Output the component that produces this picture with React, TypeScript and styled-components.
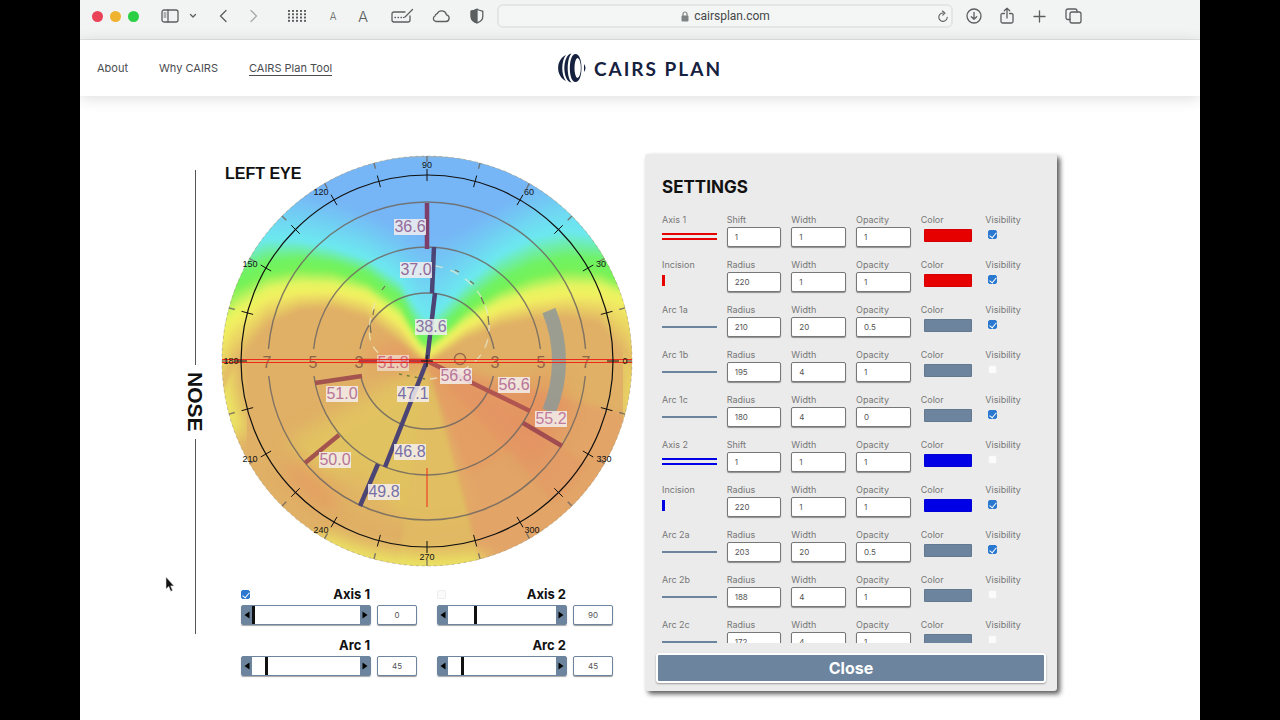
import React from 'react';
import styled, { createGlobalStyle } from 'styled-components';

const SLATE = '#6c849d';

const GlobalStyle = createGlobalStyle`
  * { box-sizing: border-box; }
  body { margin: 0; background: #000; font-family: Inter, "Liberation Sans", sans-serif; color: #111; }
  button { border: 0; padding: 0; background: none; font: inherit; color: inherit; cursor: pointer; }
`;

/* ---------- window and browser chrome ---------- */

const Window = styled.div`
  min-height: 100vh;
  margin: 0 80px;
  background: #fff;
`;

const BrowserBar = styled.div`
  display: flex;
  align-items: flex-start;
  height: 40px;
  padding: 4px 113px 0 12px;
  background: #f1f4f3;
  border-bottom: 1px solid #e2e4e4;
`;

const Lights = styled.div`
  display: flex;
  align-items: center;
  gap: 7px;
  height: 24px;
  margin-right: 19px;
`;

const Light = styled.button<{ $color: string }>`
  width: 11px;
  height: 11px;
  border-radius: 50%;
  background: ${(p) => p.$color};
`;

const ToolButton = styled.button<{ $width: number; $size?: number; $faint?: boolean }>`
  display: flex;
  flex: none;
  align-items: center;
  justify-content: center;
  width: ${(p) => p.$width}px;
  height: 24px;
  font-size: ${(p) => p.$size || 12}px;
  font-weight: 300;
  color: ${(p) => (p.$faint ? '#a8abab' : '#5c5f60')};
`;

const Address = styled.div`
  display: flex;
  flex: 1;
  align-items: center;
  justify-content: center;
  gap: 5px;
  height: 24px;
  margin-left: 9px;
  padding: 0 2px 0 20px;
  border: 2px solid #e3e6e5;
  border-radius: 6px;
  background: #f3f6f5;
  color: #6a6d6e;
`;

const AddressText = styled.div`
  display: flex;
  flex: 1;
  align-items: center;
  justify-content: center;
  gap: 5px;
  font: 12px/16px Roboto, sans-serif;
  color: #444748;
`;

/* ---------- site header ---------- */

const Header = styled.header`
  display: grid;
  grid-template-columns: 1fr auto 1fr;
  align-items: center;
  height: 56px;
  padding: 0 17px;
  background: #fff;
  box-shadow: 0 2px 14px rgba(0, 0, 0, 0.14);
`;

const Nav = styled.nav`
  display: flex;
  gap: 31px;
`;

const NavLink = styled.a<{ $current?: boolean }>`
  font-size: 11px;
  line-height: 14px;
  color: #4a4c50;
  text-decoration: none;
  border-bottom: 1px solid ${(p) => (p.$current ? '#4a4c50' : 'transparent')};
`;

const Brand = styled.a`
  display: flex;
  align-items: center;
  gap: 8px;
  color: #16213f;
  font-family: Lato, sans-serif;
  font-size: 19px;
  font-weight: 700;
  letter-spacing: 2px;
  text-decoration: none;
`;

/* ---------- page body ---------- */

const Main = styled.main`
  display: flex;
  align-items: flex-start;
  padding: 58px 24px 24px 104px;
`;

const NoseSide = styled.div`
  display: flex;
  flex-direction: column;
  align-items: center;
  gap: 7px;
  flex: none;
  width: 22px;
  height: 464px;
  margin: 16px 15px 0 0;
`;

const NoseLine = styled.div`
  flex: 1;
  width: 1px;
  background: #555;
`;

const NoseText = styled.span`
  writing-mode: vertical-rl;
  font: bold 21px/22px "Liberation Sans", Arial, sans-serif;
`;

const EyeColumn = styled.section`
  position: relative;
  flex: none;
  width: 412px;
  margin: 0 12px 0 0;
`;

const EyeTitle = styled.h2`
  position: absolute;
  top: 10px;
  left: 4px;
  margin: 0;
  font: bold 16px/20px "Liberation Sans", Arial, sans-serif;
`;

const MapSvg = styled.svg`
  display: block;
  width: 100%;
`;

const AxisControls = styled.div`
  display: grid;
  grid-template-columns: 1fr 1fr;
  gap: 12px 20px;
  padding: 19px 20px 0;
`;

const AxisHead = styled.div`
  display: flex;
  align-items: center;
  justify-content: space-between;
  width: 129px;
  height: 16px;
  margin-bottom: 3px;
`;

const AxisName = styled.label`
  margin-left: auto;
  font-size: 13px;
  line-height: 16px;
  font-weight: 700;
`;

const AxisRow = styled.div`
  display: flex;
  justify-content: space-between;
`;

const Slider = styled.div`
  display: flex;
  width: 130px;
  height: 20px;
  border: 1px solid ${SLATE};
  border-radius: 2px;
  box-shadow: 0 1px 1px rgba(0, 0, 0, 0.35);
`;

const StepButton = styled.button`
  display: flex;
  align-items: center;
  justify-content: center;
  width: 10px;
  background: ${SLATE};
`;

const Range = styled.input`
  appearance: none;
  flex: 1;
  min-width: 0;
  height: 18px;
  margin: 0;
  background: #fff;
  &::-webkit-slider-thumb {
    appearance: none;
    width: 3px;
    height: 18px;
    background: #111;
  }
`;

const TextField = styled.input<{ $center?: boolean }>`
  width: ${(p) => (p.$center ? '40px' : '100%')};
  height: 20px;
  padding: ${(p) => (p.$center ? '0' : '0 7px')};
  border: 1px solid ${(p) => (p.$center ? SLATE : '#777')};
  border-radius: 2px;
  background: #fff;
  box-shadow: 0 1px 1px rgba(0, 0, 0, 0.4);
  font-family: inherit;
  font-size: 8px;
  color: #555;
  text-align: ${(p) => (p.$center ? 'center' : 'left')};
`;

const Check = styled.input`
  appearance: none;
  display: flex;
  align-items: center;
  justify-content: center;
  flex: none;
  width: 9px;
  height: 9px;
  margin: 0;
  border: 1px solid #eee;
  border-radius: 2px;
  background: #fbfbfb;
  &:checked {
    border-color: #2a78cf;
    background: #2a78cf;
  }
  &:checked::after {
    content: "";
    width: 3px;
    height: 6px;
    border: solid #fff;
    border-width: 0 1px 1px 0;
    transform: rotate(40deg);
  }
`;

/* ---------- settings panel ---------- */

const Panel = styled.section`
  display: flex;
  flex-direction: column;
  flex: none;
  width: 412px;
  padding: 22px 11px 8px;
  border-radius: 3px;
  background: #ebebeb;
  box-shadow: 3px 3px 5px rgba(0, 0, 0, 0.65);
`;

const PanelTitle = styled.h2`
  margin: 0 6px 15px;
  font-size: 17px;
  line-height: 22px;
  font-weight: 700;
`;

const SettingsList = styled.div`
  height: 430px;
  padding: 0 6px;
  overflow-y: auto;
  scrollbar-width: none;
`;

const SettingsRow = styled.div`
  display: grid;
  grid-template-columns: repeat(6, minmax(0, 1fr));
  column-gap: 10px;
  height: 45px;
`;

const Cell = styled.label`
  display: flex;
  flex-direction: column;
  font-size: 9px;
  line-height: 14px;
  color: #777;
`;

const Sample = styled.span<{ $kind: Kind; $color: string }>`
  width: ${(p) => (p.$kind === 'mark' ? '3px' : '100%')};
  height: ${(p) => ({ axis: 7, mark: 11, arc: 2 })[p.$kind]}px;
  margin-top: ${(p) => ({ axis: 6, mark: 3, arc: 9 })[p.$kind]}px;
  border: solid ${(p) => p.$color};
  border-width: ${(p) => ({ axis: '2px 0', mark: '0 3px 0 0', arc: '2px 0 0' })[p.$kind]};
`;

const Swatch = styled.input`
  appearance: none;
  width: 48px;
  height: 13px;
  margin: 2px 0 0 3px;
  padding: 0;
  border: 0;
  background: none;
  &::-webkit-color-swatch-wrapper { padding: 0; }
  &::-webkit-color-swatch { border: 1px solid rgba(0, 0, 0, 0.08); border-radius: 1px; }
`;

const CheckSlot = styled.span`
  padding: 3px;
`;

const CloseButton = styled.button`
  height: 30px;
  margin-top: 10px;
  padding-bottom: 1px;
  border: 2px solid #fff;
  border-radius: 3px;
  background: ${SLATE};
  box-shadow: 0 1px 2px rgba(0, 0, 0, 0.35);
  color: #fff;
  font-size: 16px;
  line-height: 20px;
  font-weight: 700;
`;

const Pointer = styled.svg`
  position: absolute;
  top: 576px;
  left: 165px;
`;

/* ---------- data ---------- */

type Kind = 'axis' | 'mark' | 'arc';
type Row = [string, Kind, string, string, string, string, boolean];

const ROWS: Row[] = [
  ['Axis 1', 'axis', '1', '1', '1', '#e60000', true],
  ['Incision', 'mark', '220', '1', '1', '#e60000', true],
  ['Arc 1a', 'arc', '210', '20', '0.5', SLATE, true],
  ['Arc 1b', 'arc', '195', '4', '1', SLATE, false],
  ['Arc 1c', 'arc', '180', '4', '0', SLATE, true],
  ['Axis 2', 'axis', '1', '1', '1', '#0000e6', false],
  ['Incision', 'mark', '220', '1', '1', '#0000e6', true],
  ['Arc 2a', 'arc', '203', '20', '0.5', SLATE, true],
  ['Arc 2b', 'arc', '188', '4', '1', SLATE, false],
  ['Arc 2c', 'arc', '172', '4', '1', SLATE, false],
];

const CONTROLS = [
  { name: 'Axis 1', value: 0, checked: true },
  { name: 'Axis 2', value: 90, checked: false },
  { name: 'Arc 1', value: 45 },
  { name: 'Arc 2', value: 45 },
];

/* Height of each colour contour above the map centre, sampled along x. */
const XS = [-206, -194, -160, -127, -94, -60, -27, -8, 0, 12, 39, 73, 106, 139, 173, 199, 206];
const CONTOURS: { color: number[]; y: number[] }[] = [
  { color: [224, 176, 102], y: [40, 10, -34, -50, -52, -42, -18, -2, 3, -4, -21, -34, -40, -43, -36, 0, 20] },
  { color: [242, 240, 98], y: [-22, -38, -62, -68, -69, -61, -37, -12, -5, -13, -34, -51, -60, -65, -64, -56, -48] },
  { color: [230, 244, 96], y: [-34, -48, -71, -77, -76, -68, -44, -15, -8, -17, -39, -58, -69, -75, -74, -64, -56] },
  { color: [118, 242, 88], y: [-58, -71, -87, -92, -90, -79, -56, -22, -16, -24, -50, -71, -84, -91, -89, -76, -72] },
  { color: [112, 242, 100], y: [-74, -83, -99, -102, -98, -88, -65, -29, -23, -30, -57, -81, -96, -103, -101, -91, -86] },
  { color: [108, 232, 240], y: [-106, -110, -121, -120, -113, -102, -80, -50, -42, -50, -77, -105, -122, -129, -124, -112, -108] },
  { color: [118, 182, 246], y: [-168, -172, -172, -166, -158, -146, -130, -120, -118, -120, -132, -152, -172, -188, -186, -180, -176] },
];

const STEPS = 14;
const BANDS = CONTOURS.slice(1).flatMap((to, i) => {
  const from = CONTOURS[i];
  return Array.from({ length: STEPS }, (_, s) => {
    const t = (s + 1) / STEPS;
    const mix = (a: number, b: number) => a + (b - a) * t;
    const points = XS.map((x, k) => `${x},${mix(from.y[k], to.y[k]).toFixed(1)}`).join(' ');
    const color = from.color.map((c, k) => Math.round(mix(c, to.color[k]))).join(',');
    return { points: `-206,-206 ${points} 206,-206`, color: `rgb(${color})` };
  });
});

const RED = '#a4544e';
const NAVY = '#4b4474';
const MERIDIANS: [number, number, number, number, string][] = [
  [0, -158, 0, -112, '#7d3f69'],
  [7, -114, 5, -68, NAVY],
  [8, -68, 0, 0, NAVY],
  [-68, 0, 0, 0, '#b93a3c'],
  [0, 0, -42, 106, NAVY],
  [-49, 103, -67, 145, NAVY],
  [-112, 22, -65, 15, RED],
  [-88, 74, -122, 102, RED],
  [0, 0, 103, 50, '#b05550'],
  [96, 62, 135, 85, '#a04c50'],
];

const READINGS: [string, number, number, string][] = [
  ['36.6', -17, -134, '#94699a'],
  ['37.0', -11, -91, '#94699a'],
  ['38.6', 4, -34, '#8b73a6'],
  ['51.8', -34, 2, '#cf6c80'],
  ['51.0', -85, 33, '#b87598'],
  ['50.0', -92, 99, '#b87598'],
  ['56.8', 29, 15, '#b87598'],
  ['56.6', 87, 24, '#b87598'],
  ['55.2', 124, 58, '#c07c9c'],
  ['47.1', -14, 33, '#7770a8'],
  ['46.8', -17, 91, '#7770a8'],
  ['49.8', -43, 131, '#7770a8'],
];

const DEGREES: [string, number, number][] = [
  ['0', 198, 0], ['30', 174, -97], ['60', 102, -169], ['90', 0, -196],
  ['120', -106, -169], ['150', -177, -97], ['180', -196, 0], ['210', -177, 98],
  ['240', -106, 169], ['270', 0, 196], ['300', 105, 169], ['330', 177, 98],
];

const polar = (r: number, deg: number): [number, number] => {
  const a = (deg * Math.PI) / 180;
  return [r * Math.cos(a), -r * Math.sin(a)];
};

const wedge = (r: number, from: number, to: number) =>
  `M0 0L${polar(r, to).join(' ')}A${r} ${r} 0 0 ${from > to ? 0 : 1} ${polar(r, from).join(' ')}Z`;

const halfRing = (r: number, up: boolean) => {
  const y = up ? -12 : 15;
  const x = Math.sqrt(r * r - y * y);
  return `M${-x} ${y}A${r} ${r} 0 0 ${up ? 1 : 0} ${x} ${y}`;
};

function CorneaMap() {
  const spokes = Array.from({ length: 24 }, (_, i) => i * 15);
  const [ax, ay] = polar(132, 22.5);
  return (
    <MapSvg viewBox="-206 -207 412 413" role="img" aria-label="Corneal curvature map of the left eye">
      <defs>
        <clipPath id="disc"><circle r="205" /></clipPath>
        <filter id="soft" x="-20%" y="-20%" width="140%" height="140%"><feGaussianBlur stdDeviation="2" /></filter>
        <filter id="haze" x="-50%" y="-50%" width="200%" height="200%"><feGaussianBlur stdDeviation="9" /></filter>
      </defs>
      <g clipPath="url(#disc)">
        <rect x="-206" y="-206" width="412" height="412" fill="#e0b066" />
        <path d={wedge(160, 290, 210)} fill="#e2c761" opacity="0.8" filter="url(#haze)" />
        <path d={wedge(215, 285, 262)} fill="#e1bd64" opacity="0.7" filter="url(#soft)" />
        <path d={wedge(215, 345, 285)} fill="#e3a167" opacity="0.75" filter="url(#soft)" />
        <path d={wedge(150, 342, 315)} fill="#e59062" opacity="0.6" filter="url(#haze)" />
        <path d={wedge(120, 315, 290)} fill="#e69a62" opacity="0.5" filter="url(#soft)" />
        <path d={wedge(190, 327, 312)} fill="#e58f63" opacity="0.3" filter="url(#soft)" />
        <circle cx="118" cy="35" r="24" fill="#e88a5c" opacity="0.35" filter="url(#haze)" />
        <ellipse cx="-25" cy="-6" rx="36" ry="16" fill="#e59a62" opacity="0.7" filter="url(#haze)" />
        <ellipse cx="-65" cy="140" rx="42" ry="18" transform="rotate(35 -65 140)" fill="#e0b066" opacity="0.7" filter="url(#haze)" />
        <ellipse cx="-115" cy="125" rx="34" ry="12" transform="rotate(40 -115 125)" fill="#e59b62" opacity="0.8" filter="url(#haze)" />
        <path d="M-208 -30Q-212 30 -190 75" fill="none" stroke="#eef062" strokeWidth="22" filter="url(#haze)" />
        <path d="M-110 180Q-40 218 60 204" fill="none" stroke="#eef062" strokeWidth="20" filter="url(#haze)" />
        <path d="M206 -40Q210 10 200 60" fill="none" stroke="#eeea62" strokeWidth="14" filter="url(#haze)" />
        <g filter="url(#soft)">
          {BANDS.map((b, i) => <polygon key={i} points={b.points} fill={b.color} />)}
        </g>
      </g>
      <circle r="205" fill="none" stroke="#9a9a90" strokeDasharray="3 3" opacity="0.5" />

      <g fill="none" stroke="#6f6862" strokeWidth="1.4" opacity="0.85">
        {[68, 114, 159].map((r) => (
          <path key={r} d={halfRing(r, true) + halfRing(r, false)} />
        ))}
        {spokes.map((deg) => {
          const [x1, y1] = polar(199, deg);
          const [x2, y2] = polar(205, deg);
          return <line key={deg} x1={x1} y1={y1} x2={x2} y2={y2} />;
        })}
        <circle cx="33" cy="-2" r="5.5" stroke="#8a6046" />
      </g>
      <path d="M7 -95C30 -93 60 -72 62 -38S40 14 3 18" fill="none" stroke="#e6ead0" strokeWidth="1.4" strokeDasharray="9 8" opacity="0.75" />
      <path d="M28 -91L32 -89M43 -80L47 -77M54 -64L57 -57M61 -45L62 -36M-45 -71L-42 -75M-53 -52L-54 -46M-57 -38L-56 -28" fill="none" stroke="#76705c" strokeWidth="1.2" />
      <path d="M-52 -58Q-66 -20 -46 -6" fill="none" stroke="#ece7b8" strokeWidth="1.4" strokeDasharray="8 7" opacity="0.8" />
      <path d="M-28 13L-2 18" fill="none" stroke="#6e7c3c" strokeWidth="1.4" strokeDasharray="3 5" />

      <g fontFamily="Liberation Sans, Arial, sans-serif" fontSize="16" textAnchor="middle" fill="#8d6549">
        {([[-160, '7'], [-114, '5'], [-68, '3'], [68, '3'], [114, '5'], [159, '7']] as [number, string][]).map(([x, t]) => (
          <text key={x} x={x} y="7">{t}</text>
        ))}
      </g>
      <path d={`M${ax} ${ay}A132 132 0 0 1 ${ax} ${-ay}`} fill="none" stroke="#8e9a98" strokeWidth="14" opacity="0.85" />
      <g strokeWidth="4.5">
        {MERIDIANS.map(([x1, y1, x2, y2, c], i) => (
          <line key={i} x1={x1} y1={y1} x2={x2} y2={y2} stroke={c} />
        ))}
      </g>
      <g fontFamily="Liberation Sans, Arial, sans-serif" fontSize="16" textAnchor="middle">
        {READINGS.map(([t, x, y, c]) => (
          <g key={t}>
            <rect x={x - 16} y={y - 8} width="32" height="16" fill="#f3eeee" opacity={t === '51.8' ? 0.6 : 0.85} />
            <text x={x} y={y + 5} fill={c}>{t}</text>
          </g>
        ))}
      </g>

      <g stroke="#ee2a1c" strokeWidth="1">
        <line x1="-205" y1="-1.5" x2="205" y2="-1.5" />
        <line x1="-205" y1="1.5" x2="205" y2="1.5" />
        <line x1="0" y1="107" x2="0" y2="146" />
      </g>

      <g fill="none" stroke="#111" strokeWidth="1">
        <circle r="186" strokeWidth="1.2" />
        {spokes.map((deg) => {
          const [x1, y1] = polar(180, deg);
          const [x2, y2] = polar(192, deg);
          return <line key={deg} x1={x1} y1={y1} x2={x2} y2={y2} />;
        })}
        <path d="M-6 0H6M0 -6V6" />
      </g>
      <g fontFamily="Liberation Sans, Arial, sans-serif" fontSize="9" textAnchor="middle" fill="#111">
        {DEGREES.map(([t, x, y]) => (
          <text key={t} x={x} y={y + 3}>{t}</text>
        ))}
      </g>
    </MapSvg>
  );
}

function ToolIcon({ w, h, children }: { w: number; h: number; children: React.ReactNode }) {
  return (
    <svg width={w} height={h} viewBox={`0 0 ${w} ${h}`} fill="none" stroke="currentColor" strokeWidth="1.3" strokeLinecap="round" strokeLinejoin="round" aria-hidden="true">
      {children}
    </svg>
  );
}

function Toolbar() {
  return (
    <BrowserBar>
      <Lights>
        <Light $color="#ea4257" aria-label="Close window" />
        <Light $color="#efb32f" aria-label="Minimise window" />
        <Light $color="#2bcf43" aria-label="Zoom window" />
      </Lights>
      <ToolButton $width={24} aria-label="Sidebar">
        <ToolIcon w={18} h={14}>
          <rect x="1" y="1" width="16" height="12" rx="2" />
          <path d="M7 1V13" />
          <path d="M3 4H5M3 6H5M3 8H5" strokeWidth="0.9" />
        </ToolIcon>
      </ToolButton>
      <ToolButton $width={22} aria-label="Tab groups">
        <ToolIcon w={8} h={6}><path d="M1.5 1.5L4 4L6.5 1.5" /></ToolIcon>
      </ToolButton>
      <ToolButton $width={38} aria-label="Back">
        <ToolIcon w={8} h={14}><path d="M7 1.5L1.5 7L7 12.5" /></ToolIcon>
      </ToolButton>
      <ToolButton $width={24} $faint aria-label="Forward">
        <ToolIcon w={8} h={14}><path d="M1 1.5L6.5 7L1 12.5" /></ToolIcon>
      </ToolButton>
      <ToolButton $width={62} aria-label="Grid">
        <ToolIcon w={18} h={12}>
          {[0, 4, 8, 12, 16].flatMap((x) =>
            [0, 3.3, 6.6, 9.9].map((y) => (
              <rect key={`${x}-${y}`} x={x} y={y} width="2" height="1.9" fill="currentColor" stroke="none" />
            )),
          )}
        </ToolIcon>
      </ToolButton>
      <ToolButton $width={10} $size={10} aria-label="Smaller text">A</ToolButton>
      <ToolButton $width={50} $size={15} aria-label="Larger text">A</ToolButton>
      <ToolButton $width={28} aria-label="Autofill">
        <ToolIcon w={23} h={16}>
          <path d="M14 4H3Q1 4 1 6V12Q1 14 3 14H17Q19 14 19 12V8" />
          <path d="M21.5 1.5L14 9L12.5 9.5" />
          <path d="M4 9.5H4.5M7 9.5H7.5M10 9.5H10.5" />
        </ToolIcon>
      </ToolButton>
      <ToolButton $width={50} aria-label="Cloud">
        <ToolIcon w={20} h={14}>
          <path d="M5 12.5H15A3.4 3.4 0 0 0 15.5 5.8A5 5 0 0 0 6.2 4.6A3.2 3.2 0 0 0 4 7A2.9 2.9 0 0 0 5 12.5Z" />
        </ToolIcon>
      </ToolButton>
      <ToolButton $width={22} aria-label="Privacy report">
        <ToolIcon w={14} h={16}>
          <path d="M7 1.2C9 2.4 11 2.8 12.8 3.2V8.5C12.8 11.8 10.5 13.8 7 14.8C3.5 13.8 1.2 11.8 1.2 8.5V3.2C3 2.8 5 2.4 7 1.2Z" />
          <path d="M7 1.2V14.8C3.5 13.8 1.2 11.8 1.2 8.5V3.2C3 2.8 5 2.4 7 1.2Z" fill="currentColor" />
        </ToolIcon>
      </ToolButton>
      <Address>
        <AddressText>
          <svg width="8" height="11" viewBox="0 0 8 11" aria-hidden="true">
            <rect x="0.5" y="4.5" width="7" height="6" rx="1" fill="#808384" />
            <path d="M2 5V3A2 2 0 0 1 6 3V5" fill="none" stroke="#808384" strokeWidth="1.2" />
          </svg>
          cairsplan.com
        </AddressText>
        <ToolButton $width={12} aria-label="Reload">
          <ToolIcon w={12} h={13}>
            <path d="M6.5 3A4.2 4.2 0 1 0 10.2 7.2" strokeWidth="1.1" />
            <path d="M5.5 1L8 3.1L5.8 5.2" strokeWidth="1.1" />
          </ToolIcon>
        </ToolButton>
      </Address>
      <ToolButton $width={42} aria-label="Downloads">
        <ToolIcon w={16} h={16}>
          <circle cx="8" cy="8" r="7" />
          <path d="M8 4.5V11.3M5.3 8.8L8 11.3L10.7 8.8" />
        </ToolIcon>
      </ToolButton>
      <ToolButton $width={24} aria-label="Share">
        <ToolIcon w={14} h={18}>
          <path d="M4.5 6.5H2.5Q1 6.5 1 8V14.5Q1 16 2.5 16H11.5Q13 16 13 14.5V8Q13 6.5 11.5 6.5H9.5" />
          <path d="M7 11V1.2M4.3 3.7L7 1.2L9.7 3.7" />
        </ToolIcon>
      </ToolButton>
      <ToolButton $width={40} aria-label="New tab">
        <ToolIcon w={13} h={13}><path d="M6.5 1V12M1 6.5H12" /></ToolIcon>
      </ToolButton>
      <ToolButton $width={28} aria-label="Tab overview">
        <ToolIcon w={17} h={16}>
          <rect x="5" y="4" width="11" height="11" rx="2" />
          <path d="M5 11.5H3Q1 11.5 1 9.5V3Q1 1 3 1H10Q12 1 12 3V4" />
        </ToolIcon>
      </ToolButton>
    </BrowserBar>
  );
}

export default function App() {
  return (
    <>
      <GlobalStyle />
      <Window>
        <Toolbar />
        <Header>
          <Nav>
            <NavLink href="#about">About</NavLink>
            <NavLink href="#why">Why CAIRS</NavLink>
            <NavLink href="#tool" $current>CAIRS Plan Tool</NavLink>
          </Nav>
          <Brand href="#home">
            <svg width="28" height="30" viewBox="0 0 28 30" fill="#16213f" aria-hidden="true">
              <path d="M8 2C-2.5 7-2.5 23 8 28C3 22 3 8 8 2Z" />
              <path d="M13.5 0.5C4 2 4 28 13.5 29.5C8.5 24 8.5 6 13.5 0.5Z" />
              <path fillRule="evenodd" d="M17.5 1C10 1 10 29 17.5 29C25.5 29 25.5 1 17.5 1ZM19.5 5C24 6 24 24 19.5 25C15.5 24 15.5 6 19.5 5Z" />
              <path d="M26 11Q29 15 26 19Z" />
            </svg>
            CAIRS PLAN
          </Brand>
        </Header>

        <Main>
          <NoseSide>
            <NoseLine />
            <NoseText>NOSE</NoseText>
            <NoseLine />
          </NoseSide>

          <EyeColumn>
            <CorneaMap />
            <EyeTitle>LEFT EYE</EyeTitle>
            <AxisControls>
              {CONTROLS.map((c) => {
                const id = c.name.toLowerCase().replace(' ', '-');
                return (
                  <div key={c.name}>
                    <AxisHead>
                      {c.checked !== undefined && (
                        <Check type="checkbox" defaultChecked={c.checked} aria-label={`Show ${c.name}`} />
                      )}
                      <AxisName htmlFor={id}>{c.name}</AxisName>
                    </AxisHead>
                    <AxisRow>
                      <Slider>
                        <StepButton aria-label={`Decrease ${c.name}`}>
                          <svg width="6" height="8" viewBox="0 0 6 8" aria-hidden="true"><path d="M5.5 0.5V7.5L0.5 4Z" /></svg>
                        </StepButton>
                        <Range id={id} type="range" min="0" max="360" defaultValue={c.value} />
                        <StepButton aria-label={`Increase ${c.name}`}>
                          <svg width="6" height="8" viewBox="0 0 6 8" aria-hidden="true"><path d="M0.5 0.5V7.5L5.5 4Z" /></svg>
                        </StepButton>
                      </Slider>
                      <TextField $center defaultValue={c.value} aria-label={`${c.name} degrees`} />
                    </AxisRow>
                  </div>
                );
              })}
            </AxisControls>
          </EyeColumn>

          <Panel>
            <PanelTitle>SETTINGS</PanelTitle>
            <SettingsList>
              {ROWS.map(([name, kind, first, width, opacity, color, visible], i) => (
                <SettingsRow key={i}>
                  <Cell as="div">
                    {name}
                    <Sample $kind={kind} $color={color} />
                  </Cell>
                  <Cell>
                    {kind === 'axis' ? 'Shift' : 'Radius'}
                    <TextField defaultValue={first} />
                  </Cell>
                  <Cell>
                    Width
                    <TextField defaultValue={width} />
                  </Cell>
                  <Cell>
                    Opacity
                    <TextField defaultValue={opacity} />
                  </Cell>
                  <Cell>
                    Color
                    <Swatch type="color" defaultValue={color} />
                  </Cell>
                  <Cell>
                    Visibility
                    <CheckSlot><Check type="checkbox" defaultChecked={visible} /></CheckSlot>
                  </Cell>
                </SettingsRow>
              ))}
            </SettingsList>
            <CloseButton>Close</CloseButton>
          </Panel>
        </Main>
      </Window>
      <Pointer width="10" height="17" viewBox="0 0 10 17" aria-hidden="true">
        <path d="M1 1V13L3.8 10.5L5.7 15.3L7.6 14.5L5.7 9.9H9Z" fill="#111" stroke="#ddd" strokeWidth="0.6" />
      </Pointer>
    </>
  );
}
